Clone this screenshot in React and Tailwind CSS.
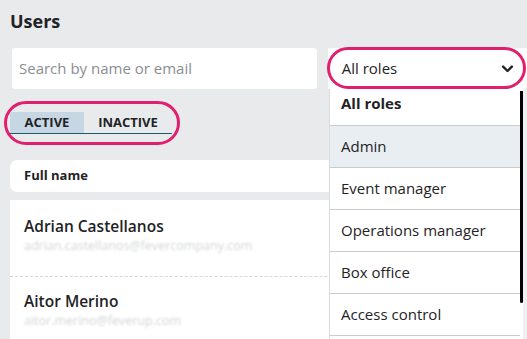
import React from 'react';

const roles = ['Admin', 'Event manager', 'Operations manager', 'Box office', 'Access control'];

const users = [
  { name: 'Adrian Castellanos', email: 'adrian.castellanos@fevercompany.com' },
  { name: 'Aitor Merino', email: 'aitor.merino@feverup.com' },
];

function Chevron() {
  return (
    <svg width="15" height="15" viewBox="0 0 24 24" fill="none" stroke="#1f2326" strokeWidth="3.8" strokeLinecap="round" strokeLinejoin="round">
      <path d="M5 9l7 7 7-7" />
    </svg>
  );
}

export default function App() {
  return (
    <div className="relative w-[527px] h-[339px] overflow-hidden bg-[#e9eaec] font-['Open_Sans',sans-serif] text-[#1f2326]">
      <h1 className="pl-[10px] pt-[8px] text-[18px] font-bold leading-[26px]">Users</h1>

      {/* filters */}
      <div className="flex items-start gap-[11px] pl-[12px] mt-[14px]">
        <div className="w-[306px] h-[41px] bg-white rounded-[3px] flex items-center px-[7px] text-[15px] text-[#8a8e93]">
          Search by name or email
        </div>
        <div className="relative w-[200px] h-[41px] bg-white flex items-center justify-between pl-[14px] pr-[12px] text-[15px]">
          <span>All roles</span>
          <Chevron />
          <div className="absolute -left-[1px] -top-[1px] w-[199px] h-[42px] border-[3px] border-[#e0206e] rounded-[21px]" />
        </div>
      </div>

      {/* tabs */}
      <div className="ml-[4px] mt-[12px] inline-flex border-[3px] border-[#e0206e] rounded-[22px] pl-[3px] pr-[5px] py-[8px]">
        <div className="flex border-b-[1.5px] border-[#1d5b73] text-[13px] font-bold leading-[21px]">
          <div className="w-[74px] bg-[#c6d7e3] text-center">ACTIVE</div>
          <div className="w-[88px] text-center">INACTIVE</div>
        </div>
      </div>

      {/* table */}
      <div className="ml-[10px] mt-[15px]">
        <div className="h-[32px] bg-white rounded-l-[7px] flex items-center pl-[14px] text-[13px] font-bold">
          <span className="w-[496px]">Full name</span>
          <span>Role</span>
        </div>
        <div className="mt-[8px] bg-white">
          {users.map((u, i) => (
            <div key={u.name} className={`pl-[14px] ${i === 0 ? 'h-[77px] border-b border-dashed border-[#d5d7da] pt-[16px]' : 'pt-[14px] h-[80px]'}`}>
              <div className="text-[15.5px] font-semibold leading-[20px]">{u.name}</div>
              <div className="mt-[2px] text-[12.5px] leading-[16px] text-[#d2d4d7] blur-[1px]">{u.email}</div>
            </div>
          ))}
        </div>
      </div>

      {/* dropdown */}
      <div className="absolute left-[329px] top-[89px] w-[198px] h-[260px] flex">
        <div className="w-[191px] bg-white border-l border-[#d9dbde] text-[15px]">
          <div className="h-[37px] pl-[11px] pt-[2px] font-bold border-b border-[#c9cbce] leading-[24px]">All roles</div>
          {roles.map((r, i) => (
            <div
              key={r}
              className={`h-[42px] pl-[11px] flex items-center border-b border-[#c9cbce] ${i === 0 ? 'bg-[#e9eef2]' : ''}`}
            >
              {r}
            </div>
          ))}
        </div>
        <div className="w-[3px] bg-white">
          <div className="mt-[2px] h-[212px] w-[3px] bg-black rounded-b-[2px]" />
        </div>
        <div className="w-[4px] bg-[#eef0f2]" />
      </div>
    </div>
  );
}
